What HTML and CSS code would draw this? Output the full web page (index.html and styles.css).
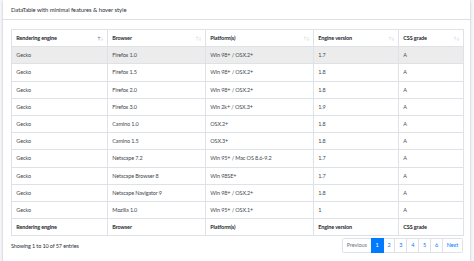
FILE: index.html
```html
<!DOCTYPE html>
<html>
<head>
<meta charset="utf-8">
<link rel="stylesheet" href="styles.css">
</head>
<body>
<div class="card">
  <div class="card-header"><h3 class="card-title">DataTable with minimal features &amp; hover style</h3></div>
  <div class="card-body">
    <table class="dt">
      <colgroup><col class="c1"><col class="c2"><col class="c3"><col class="c4"><col class="c5"></colgroup>
      <thead>
        <tr>
          <th class="sorting active"><span>Rendering engine</span><i class="sort"><b class="up on">↑</b><b class="dn">↓</b></i></th>
          <th class="sorting"><span>Browser</span><i class="sort"><b class="up">↑</b><b class="dn">↓</b></i></th>
          <th class="sorting"><span>Platform(s)</span><i class="sort"><b class="up">↑</b><b class="dn">↓</b></i></th>
          <th class="sorting"><span>Engine version</span><i class="sort"><b class="up">↑</b><b class="dn">↓</b></i></th>
          <th class="sorting"><span>CSS grade</span><i class="sort"><b class="up">↑</b><b class="dn">↓</b></i></th>
        </tr>
      </thead>
      <tbody>
        <tr class="hover"><td>Gecko</td><td>Firefox 1.0</td><td>Win 98+ / OSX.2+</td><td>1.7</td><td>A</td></tr>
        <tr><td>Gecko</td><td>Firefox 1.5</td><td>Win 98+ / OSX.2+</td><td>1.8</td><td>A</td></tr>
        <tr><td>Gecko</td><td>Firefox 2.0</td><td>Win 98+ / OSX.2+</td><td>1.8</td><td>A</td></tr>
        <tr><td>Gecko</td><td>Firefox 3.0</td><td>Win 2k+ / OSX.3+</td><td>1.9</td><td>A</td></tr>
        <tr><td>Gecko</td><td>Camino 1.0</td><td>OSX.2+</td><td>1.8</td><td>A</td></tr>
        <tr><td>Gecko</td><td>Camino 1.5</td><td>OSX.3+</td><td>1.8</td><td>A</td></tr>
        <tr><td>Gecko</td><td>Netscape 7.2</td><td>Win 95+ / Mac OS 8.6-9.2</td><td>1.7</td><td>A</td></tr>
        <tr><td>Gecko</td><td>Netscape Browser 8</td><td>Win 98SE+</td><td>1.7</td><td>A</td></tr>
        <tr><td>Gecko</td><td>Netscape Navigator 9</td><td>Win 98+ / OSX.2+</td><td>1.8</td><td>A</td></tr>
        <tr><td>Gecko</td><td>Mozilla 1.0</td><td>Win 95+ / OSX.1+</td><td>1</td><td>A</td></tr>
      </tbody>
      <tfoot>
        <tr><th>Rendering engine</th><th>Browser</th><th>Platform(s)</th><th>Engine version</th><th>CSS grade</th></tr>
      </tfoot>
    </table>
    <div class="dt-bottom">
      <div class="info">Showing 1 to 10 of 57 entries</div>
      <ul class="pagination">
        <li class="page disabled"><a>Previous</a></li>
        <li class="page current"><a>1</a></li>
        <li class="page"><a>2</a></li>
        <li class="page"><a>3</a></li>
        <li class="page"><a>4</a></li>
        <li class="page"><a>5</a></li>
        <li class="page"><a>6</a></li>
        <li class="page"><a>Next</a></li>
      </ul>
    </div>
  </div>
</div>
</body>
</html>
```

FILE: styles.css
```css
html, body {
  margin: 0;
  padding: 0;
  background: #f4f6f9;
  font-family: Lato, "Open Sans", sans-serif;
  color: #212529;
}

body {
  padding: 0 4px 0 3px;
}

.card {
  background: #fff;
  box-shadow: 0 0 1px rgba(0,0,0,.125), 0 1px 3px rgba(0,0,0,.2);
  border-radius: 0 0 2px 2px;
  min-height: 270px;
}

.card-header {
  border-bottom: 1px solid rgba(0,0,0,.125);
  padding: 6px 8px 0;
  height: 13px;
}

.card-title {
  margin: 0;
  font-size: 5.9px;
  letter-spacing: -0.05px;
  font-weight: 400;
  line-height: 8px;
  color: #2b3035;
}

.card-body {
  padding: 9px 6px 0 8px;
}

.dt {
  width: 100%;
  border-collapse: collapse;
  table-layout: fixed;
  font-size: 5.5px;
  letter-spacing: -0.13px;
  border: 1px solid #dee2e6;
}

.c1 { width: 96px; }
.c2 { width: 98px; }
.c3 { width: 108px; }
.c4 { width: 85px; }
.c5 { width: auto; }

.dt th, .dt td {
  padding: 4px 4.3px;
  line-height: 8.2px;
  border: 1px solid #dee2e6;
  text-align: left;
  white-space: nowrap;
  overflow: hidden;
}

.dt td {
  color: #454a50;
}

.dt th {
  font-weight: 700;
  color: #262a2e;
}

.sorting {
  position: relative;
}

.sort {
  position: absolute;
  right: 3.5px;
  top: 4px;
  font-style: normal;
  font-weight: 400;
  font-size: 4.6px;
  display: flex;
}

.sort b {
  font-weight: 400;
  color: #212529;
  opacity: .22;
  margin-left: -0.5px;
}

.sort b.on {
  opacity: .8;
}

.dt tbody tr.hover td {
  background: #ececec;
}

.dt-bottom {
  display: flex;
  justify-content: space-between;
  align-items: center;
  padding-top: 2px;
}

.info {
  font-size: 5.5px;
  letter-spacing: -0.13px;
  color: #2b3035;
}

.pagination {
  display: flex;
  list-style: none;
  margin: 0 1px 0 0;
  padding: 0;
}

.page a {
  display: block;
  font-size: 5.5px;
  letter-spacing: -0.1px;
  line-height: 7px;
  padding: 3px 3.9px;
  border: 1px solid #dee2e6;
  margin-left: -1px;
  color: #007bff;
  background: #fff;
}

.page:first-child a {
  border-radius: 1.5px 0 0 1.5px;
  margin-left: 0;
}

.page:last-child a {
  border-radius: 0 1.5px 1.5px 0;
}

.page.disabled a {
  color: #6c757d;
}

.page.current a {
  position: relative;
  background: #007bff;
  border-color: #007bff;
  color: #fff;
}
```
